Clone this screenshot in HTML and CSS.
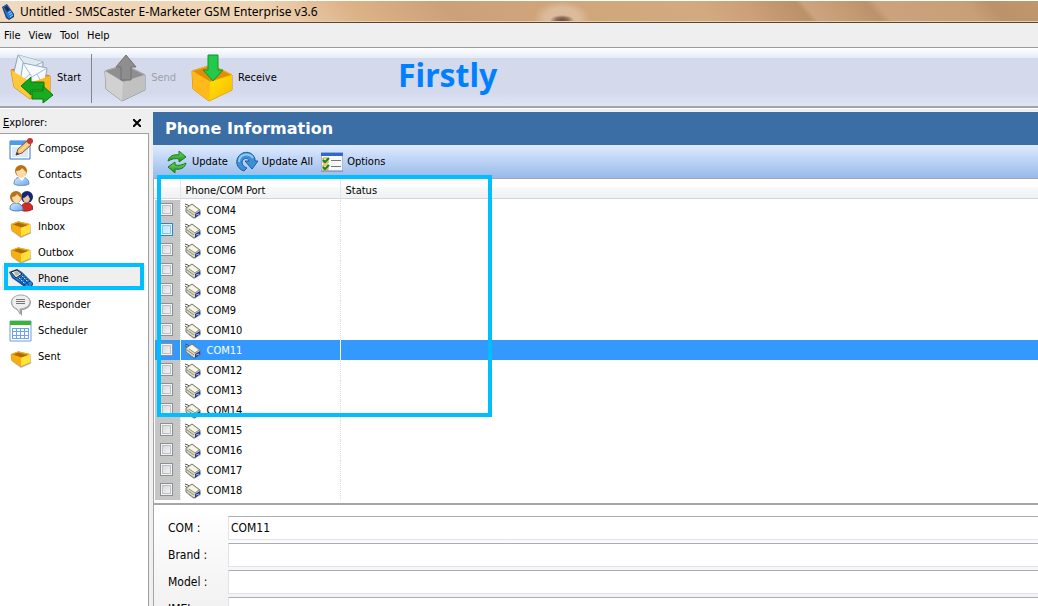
FILE: index.html
```html
<!DOCTYPE html>
<html lang="en">
<head>
    <meta charset="UTF-8">
    <meta name="viewport" content="width=device-width, initial-scale=1.0">
    <title>Untitled - SMSCaster E-Marketer GSM Enterprise v3.6</title>
    <link rel="stylesheet" href="styles.css">
</head>
<body>
    <!-- shared icons -->
    <svg class="defs" aria-hidden="true">
        <defs>
            <linearGradient id="gold" x1="0" y1="0" x2="1" y2="1"><stop offset="0" stop-color="#ffd54a"/><stop offset="1" stop-color="#f0a400"/></linearGradient>
            <linearGradient id="yellow" x1="0" y1="0" x2="1" y2="1"><stop offset="0" stop-color="#ffe600"/><stop offset="1" stop-color="#f7b800"/></linearGradient>
            <linearGradient id="silver" x1="0" y1="0" x2="1" y2="1"><stop offset="0" stop-color="#d8d8d8"/><stop offset="1" stop-color="#a9a9a9"/></linearGradient>
            <linearGradient id="leaf" x1="0" y1="0" x2="0" y2="1"><stop offset="0" stop-color="#6fe05a"/><stop offset="1" stop-color="#1d8f22"/></linearGradient>
            <linearGradient id="sky" x1="0" y1="0" x2="1" y2="1"><stop offset="0" stop-color="#d8ecff"/><stop offset="1" stop-color="#6ba6e6"/></linearGradient>
        </defs>
        <symbol id="phone" viewBox="0 0 24 20">
            <path d="M0 3 8 0l5 3 11 11c1 3-4 6-7 5L3 9z" fill="#0c4c9c"/>
            <path d="M1 3 8 1l4 2 11 11c0 3-3 4-5 4L4 8z" fill="#2b86de"/>
            <path d="m2 3 6-2 5 4-6 4z" fill="#e8edf0" stroke="#222"/>
            <path d="m5 3 3-1 3 3-4 2z" fill="#a9b8b0"/>
            <path d="m9 10 6-4M11 12l6-4M13 14l6-4M15 16l6-4M12 7l8 9M9 9l8 9" stroke="#0b3f86" fill="none"/>
            <path d="m10 10 1-1m2-1 1-1m-2 5 1-1m2-1 1-1m-2 5 1-1m2-1 1-1" stroke="#b9dcff"/>
        </symbol>
        <symbol id="box" viewBox="0 0 24 20">
            <path d="m3 14 9 6 11-5v-2L12 18z" fill="#555" opacity=".4"/>
            <path d="m1 5 8-3 13 3v9l-10 4L2 12z" fill="#ffc20e" stroke="#c98700"/>
            <path d="m1 5 8-3 13 3-10 4z" fill="#d18a00" stroke="#f0b429"/>
            <path d="m4 5 5-2 10 3-7 2z" fill="#a96c00"/>
            <path d="m12 9 10-4v9l-10 4z" fill="#ffe13a"/>
            <path d="m1 5 11 4v9L2 12z" fill="#f9ad12"/>
        </symbol>
        <symbol id="port" viewBox="0 0 16 16">
            <path d="m2 11 7 5 7-4v-3L9 14z" fill="#555" opacity=".35"/>
            <path d="m0 1 3 1 3 3M1 5l4 2M0 3l4 3" stroke="#55554a" fill="none"/>
            <path d="m1 5 6-4 8 6v4l-6 4-8-6z" fill="#dcdcc6" stroke="#77776a"/>
            <path d="m3 5 4-3 6 5-4 3z" fill="#f6f6e6"/>
            <path d="m2 7 7 5M4 6l6 4 4-3" stroke="#8e8e7a" fill="none"/>
            <path d="m10 11 5-3v3l-5 4z" fill="#263b91"/>
            <path d="m11 12 3-1" stroke="#aab8ff"/>
        </symbol>
    </svg>

    <header class="titlebar">
        <svg class="app-icon" viewBox="0 0 15 18">
            <path d="m2 4 5-3 7 10v3l-5 3-3-2z" fill="#0b3f86"/>
            <path d="m3 4 4-2 6 9v2l-4 3-2-2z" fill="#2777cf"/>
            <path d="m4 4 3-1 3 4-3 2z" fill="#1c2c4c"/>
            <path d="m8 10 3-2m-2 4 3-2m-2 4 3-2" stroke="#9fd0ff"/>
        </svg>
        <span>Untitled - SMSCaster E-Marketer GSM Enterprise v3.6</span>
    </header>

    <nav class="menubar">
        <button>File</button>
        <button>View</button>
        <button>Tool</button>
        <button>Help</button>
    </nav>

    <div class="toolbar">
        <button class="big-btn">
            <svg viewBox="0 0 46 50">
                <path d="m3 17 8-2 31 8v17L22 46 6 34z" fill="#efa21b" stroke="#cc8100"/>
                <path d="m10 2 25 7-1 25-22-2-7-9z" fill="#edf3f9" stroke="#8fa3b5"/>
                <path d="m10 2 10 14 15-7" fill="#dfe9f2" stroke="#9db0c1"/>
                <path d="m15 10 24 5-3 19-24-4z" fill="#f7faff" stroke="#91a9c0"/>
                <path d="m15 10 9 14 15-9M12 30l10-9M36 34l-7-13" fill="none" stroke="#a9bdd0"/>
                <path d="m3 17 18 11 1 18L6 34z" fill="#ffc83b"/>
                <path d="m21 30 21-7v17L22 46z" fill="#ffb91f"/>
                <path d="m13 33 10-9v5h13v8H23v5z" fill="#13a51b" stroke="#077c10"/>
                <path d="m45 42-10-9v5H24v8h11v4z" fill="#18ad20" stroke="#077c10"/>
            </svg>
            <span>Start</span>
        </button>
        <span class="separator"></span>
        <button class="big-btn" disabled>
            <svg viewBox="0 0 46 50">
                <path d="m3 18 20-6 20 10v15L20 48 4 36z" fill="url(#silver)" stroke="#8b8b8b"/>
                <path d="m3 18 20-6 20 10-22 7z" fill="#8f8f8f" stroke="#aaa"/>
                <path d="m21 29 22-7v15L20 48z" fill="#c1c1c1"/>
                <path d="m3 18 18 11-1 19L4 36z" fill="#d1d1d1"/>
                <path d="m24 2 10 12h-5v13H19V14h-5z" fill="#8e8e8e" stroke="#717171"/>
            </svg>
            <span>Send</span>
        </button>
        <button class="big-btn">
            <svg viewBox="0 0 46 50">
                <path d="m3 18 20-6 20 10v15L20 48 4 36z" fill="url(#yellow)" stroke="#d78e00"/>
                <path d="m3 18 20-6 20 10-22 7z" fill="#e18e00" stroke="#f4ae26"/>
                <path d="m21 29 22-7v15L20 48z" fill="url(#yellow)"/>
                <path d="m3 18 18 11-1 19L4 36z" fill="#ffb91b"/>
                <path d="M19 2h10v15h5L24 28 14 17h5z" fill="#24c94b" stroke="#109431"/>
            </svg>
            <span>Receive</span>
        </button>
        <strong class="note-text">Firstly</strong>
    </div>

    <div class="workspace">
        <aside class="explorer">
            <div class="explorer-head">
                <span><u>E</u>xplorer:</span>
                <button class="close" aria-label="Close">
                    <svg viewBox="0 0 8 8"><path d="m0 0 8 8M8 0 0 8" stroke="#000" stroke-width="2"/></svg>
                </button>
            </div>
            <ul class="folders">
                <li><a href="#">
                    <svg viewBox="0 0 24 22">
                        <path d="M1 3h20v18H1z" fill="#fff" stroke="#3577c9"/>
                        <path d="M1 3h20v4H1z" fill="#4b9bf0"/>
                        <path d="M3 9h16v10H3z" fill="#dce9f8"/>
                        <path d="m7 17 2-6 9-8 4 4-9 8z" fill="#ffc578" stroke="#7e5730"/>
                        <path d="m7 17 1-3 2 2z" fill="#333"/>
                        <path d="m11 13 8-7" stroke="#fff0c9"/>
                        <circle cx="21" cy="3" r="3" fill="#c73632"/>
                    </svg>Compose</a></li>
                <li><a href="#">
                    <svg viewBox="0 0 24 22">
                        <path d="M5 20c0-5 3-7 7-7s8 2 8 7c-3 2-12 2-15 0z" fill="url(#sky)" stroke="#6193c8"/>
                        <path d="m9 13 4 4 3-4z" fill="#fff"/>
                        <ellipse cx="12" cy="7" rx="6" ry="6" fill="#b97116"/>
                        <path d="M7 7c3 0 5-1 6-3l4 4c0 8-9 8-10-1z" fill="#ffdaa8"/>
                    </svg>Contacts</a></li>
                <li><a href="#">
                    <svg viewBox="0 0 24 22">
                        <path d="M12 20c0-5 2-7 6-7s6 3 6 6c-3 2-9 3-12 1z" fill="#d52a22" stroke="#9c1712"/>
                        <circle cx="18" cy="7" r="6" fill="#112879"/>
                        <path d="M14 8c2 0 3-2 5-3l2 4c-1 5-7 5-7-1z" fill="#f3c49a"/>
                        <path d="M1 19c0-4 2-6 6-6s7 3 7 7c-3 1-10 2-13-1z" fill="url(#sky)" stroke="#4a83c2"/>
                        <circle cx="7" cy="7" r="6" fill="#b97116"/>
                        <path d="M3 7c2 0 4-1 5-3l4 4c-1 7-8 7-9-1z" fill="#ffdaa8"/>
                    </svg>Groups</a></li>
                <li><a href="#"><svg class="box"><use href="#box"/></svg>Inbox</a></li>
                <li><a href="#"><svg class="box"><use href="#box"/></svg>Outbox</a></li>
                <li class="current"><a href="#"><svg><use href="#phone"/></svg>Phone</a></li>
                <li><a href="#">
                    <svg viewBox="0 0 24 22">
                        <path d="M13 16v6l-5-6C-1 13 0 1 12 1s14 13 1 15z" fill="#9a9a9a"/>
                        <path d="M11 15v5l-3-5C0 12 1 1 12 1s13 13-1 14z" fill="#eee" stroke="#aaa"/>
                        <path d="M7 5.500h9M7 7.500h9M7 9.500h9" stroke="#777"/>
                    </svg>Responder</a></li>
                <li><a href="#">
                    <svg viewBox="0 0 24 22">
                        <path d="M1 1h21v20H1z" fill="#fff" stroke="#6f9ed8"/>
                        <path d="M1 1h21v4H1z" fill="#3cb52e"/>
                        <path d="M3 8h17v11H3z" fill="#6ba4ec"/>
                        <path d="M4 9h3v2H4zm4 0h3v2H8zm4 0h3v2h-3zm4 0h3v2h-3zM4 12h3v3H4zm4 0h3v3H8zm4 0h3v3h-3zm4 0h3v3h-3zM4 16h3v2H4zm4 0h3v2H8zm4 0h3v2h-3zm4 0h3v2h-3z" fill="#fff"/>
                    </svg>Scheduler</a></li>
                <li><a href="#"><svg class="box"><use href="#box"/></svg>Sent</a></li>
            </ul>
        </aside>

        <main class="content">
            <h1>Phone Information</h1>
            <div class="actions">
                <button>
                    <svg viewBox="0 0 22 22">
                        <path d="M2 10c1-5 6-7 11-6V0l7 6-7 5V8c-4-1-7 0-11 2z" fill="url(#leaf)" stroke="#187a1c"/>
                        <path d="M20 12c-1 5-6 7-11 6v4l-7-6 7-5v3c4 1 7 0 11-2z" fill="url(#leaf)" stroke="#187a1c"/>
                    </svg>Update</button>
                <button>
                    <svg viewBox="0 0 22 22">
                        <path d="M8 20C2 18 0 13 1 9c2-9 15-11 18-1v2h3l-6 8-7-8h4c-1-4-6-3-7 1 0 3 2 5 5 6z" fill="#3d8fd8" stroke="#1c5e9f"/>
                        <path d="M3 11C3 3 13 1 17 7" fill="none" stroke="#90cbf8" stroke-width="2"/>
                    </svg>Update All</button>
                <button>
                    <svg viewBox="0 0 22 22">
                        <path d="M0 2h22v18H0z" fill="#f6f8fc" stroke="#667ba5"/>
                        <path d="M0 2h22v3H0z" fill="#2c69d4"/>
                        <path d="M2 7h5v5H2zm0 7h5v5H2z" fill="#fff2b0" stroke="#c99b2b"/>
                        <path d="m2 9 2 2 4-4M2 16l2 2 4-4" fill="none" stroke="#168421" stroke-width="2"/>
                        <path d="M10 9.500h10M10 15.500h10" stroke="#777"/>
                    </svg>Options</button>
            </div>

            <div class="port-list">
                <table>
                    <colgroup><col class="c-check"><col class="c-port"><col></colgroup>
                    <thead>
                        <tr><th></th><th>Phone/COM Port</th><th>Status</th></tr>
                    </thead>
                    <tbody>
                        <tr><td><input type="checkbox" aria-label="COM4"></td><td><svg><use href="#port"/></svg>COM4</td><td></td></tr>
                        <tr><td><input type="checkbox" class="hot" aria-label="COM5"></td><td><svg><use href="#port"/></svg>COM5</td><td></td></tr>
                        <tr><td><input type="checkbox" aria-label="COM6"></td><td><svg><use href="#port"/></svg>COM6</td><td></td></tr>
                        <tr><td><input type="checkbox" aria-label="COM7"></td><td><svg><use href="#port"/></svg>COM7</td><td></td></tr>
                        <tr><td><input type="checkbox" aria-label="COM8"></td><td><svg><use href="#port"/></svg>COM8</td><td></td></tr>
                        <tr><td><input type="checkbox" aria-label="COM9"></td><td><svg><use href="#port"/></svg>COM9</td><td></td></tr>
                        <tr><td><input type="checkbox" aria-label="COM10"></td><td><svg><use href="#port"/></svg>COM10</td><td></td></tr>
                        <tr class="selected"><td><input type="checkbox" aria-label="COM11"></td><td><svg><use href="#port"/></svg>COM11</td><td></td></tr>
                        <tr><td><input type="checkbox" aria-label="COM12"></td><td><svg><use href="#port"/></svg>COM12</td><td></td></tr>
                        <tr><td><input type="checkbox" aria-label="COM13"></td><td><svg><use href="#port"/></svg>COM13</td><td></td></tr>
                        <tr><td><input type="checkbox" aria-label="COM14"></td><td><svg><use href="#port"/></svg>COM14</td><td></td></tr>
                        <tr><td><input type="checkbox" aria-label="COM15"></td><td><svg><use href="#port"/></svg>COM15</td><td></td></tr>
                        <tr><td><input type="checkbox" aria-label="COM16"></td><td><svg><use href="#port"/></svg>COM16</td><td></td></tr>
                        <tr><td><input type="checkbox" aria-label="COM17"></td><td><svg><use href="#port"/></svg>COM17</td><td></td></tr>
                        <tr><td><input type="checkbox" aria-label="COM18"></td><td><svg><use href="#port"/></svg>COM18</td><td></td></tr>
                    </tbody>
                </table>
                <div class="note-box"></div>
            </div>

            <form class="details">
                <label for="com">COM :</label><input id="com" type="text" value="COM11">
                <label for="brand">Brand :</label><input id="brand" type="text">
                <label for="model">Model :</label><input id="model" type="text">
                <label for="imei">IMEI :</label><input id="imei" type="text">
            </form>
        </main>
    </div>
</body>
</html>
```
FILE: styles.css
```css
*{
    box-sizing: border-box;
}
body{
    display: flex;
    flex-direction: column;
    height: 100vh;
    margin: 0;
    overflow: hidden;
    background-color: #efefef;
    color: #000;
    font: 11px/16px "DejaVu Sans Condensed", "Noto Sans", sans-serif;
}
button{
    padding: 0;
    border: 0;
    background: none;
    color: inherit;
    font: inherit;
}
svg{
    flex: none;
}
.defs{
    position: absolute;
    width: 0;
    height: 0;
}
/*title and menu*/
.titlebar{
    display: flex;
    flex: none;
    align-items: center;
    gap: 5px;
    height: 23px;
    border-top: 1px solid #fff;
    border-bottom: 1px solid #5c4434;
    box-shadow: inset 0 -1px #e8cdb0;
    background:
        radial-gradient(ellipse 12px 5px at 562px 19px, #6b5040 0, #8c6e5a 50%, transparent 100%),
        radial-gradient(ellipse 28px 18px at 562px 18px, #dcbb9c 0, #dcbb9c 60%, transparent 100%),
        linear-gradient(50deg, #f0d9bf 0, #efd3b2 210px, #dcb287 278px, #cda177 350px, #d3aa7f 543px, #cda077 580px, #bb9168 622px, #cca47e 628px, #c49a72 658px, #bc926a 676px, #cba27c 684px, #c8a077 750px, #bc926a 770px, #c0966b 809px);
    font: 12px/16px "Noto Sans", "Open Sans", sans-serif;
}
.app-icon{
    width: 15px;
    height: 18px;
}
.menubar{
    display: flex;
    flex: none;
    gap: 8px;
    height: 25px;
    padding: 2px 0 0 4px;
    border-bottom: 1px solid #9c9a9f;
}
/*main toolbar*/
.toolbar{
    position: relative;
    display: flex;
    flex: none;
    align-items: center;
    height: 60px;
    padding: 2px 0 0 8px;
    border-bottom: 2px solid #a0a2ac;
    background: linear-gradient(#fff 0, #e4ebf7 10px, #d4d9ec 10px, #d4d9ec 44px, #e0e5f5 58px);
}
.big-btn{
    display: flex;
    align-items: center;
    gap: 3px;
}
.big-btn svg{
    width: 46px;
    height: 50px;
}
.big-btn:disabled{
    color: #a0a0a8;
}
.big-btn + .big-btn{
    margin-left: 13px;
}
.separator{
    width: 1px;
    height: 49px;
    margin: 0 10px;
    background-color: #85858f;
}
.note-text{
    position: absolute;
    top: 5px;
    left: 398px;
    color: #0080ff;
    font: bold 32px/44px "Noto Sans", "Open Sans", sans-serif;
}
.workspace{
    display: flex;
    flex: 1;
    min-height: 0;
    border-top: 1px solid #fff;
}
/*explorer*/
.explorer{
    display: flex;
    flex: none;
    flex-direction: column;
    width: 149px;
    margin-right: 4px;
}
.explorer-head{
    display: flex;
    align-items: center;
    justify-content: space-between;
    height: 24px;
    padding: 3px 8px 0 3px;
}
.close{
    display: flex;
}
.close svg{
    width: 8px;
    height: 8px;
}
.folders{
    flex: 1;
    margin: 0;
    padding: 1px 0 0 2px;
    border-top: 1px solid #a0a0a0;
    border-right: 1px solid #a0a0a0;
    background-color: #fff;
    list-style: none;
}
.folders li{
    position: relative;
    margin-right: 2px;
}
.folders a{
    display: flex;
    align-items: center;
    gap: 5px;
    height: 26px;
    padding: 2px 0 0 7px;
    color: #000;
    text-decoration: none;
}
.folders svg{
    width: 24px;
    height: 22px;
}
.folders .box{
    padding-top: 4px;
}
.folders .current{
    background-color: #efefef;
}
.folders .current::after{
    content: "";
    position: absolute;
    inset: -2px 2px 1px;
    border: 4px solid #00bfff;
}
/*content*/
.content{
    display: flex;
    flex: 1;
    flex-direction: column;
    min-width: 0;
    margin-top: 3px;
}
.content h1{
    flex: none;
    height: 33px;
    margin: 0;
    padding-left: 12px;
    background-color: #3a6ea5;
    color: #fff;
    font: bold 16px/33px "DejaVu Sans", "Noto Sans", sans-serif;
}
.actions{
    display: flex;
    flex: none;
    gap: 8px;
    height: 33px;
    padding: 1px 0 0 13px;
    background: linear-gradient(#deebff, #97b9ea);
}
.actions button{
    display: flex;
    align-items: center;
    gap: 4px;
}
.actions svg{
    width: 22px;
    height: 22px;
}
.port-list{
    position: relative;
    flex: none;
    padding-bottom: 3px;
    border: solid #a5a5aa;
    border-width: 1px 0 2px 1px;
    background-color: #fff;
}
table{
    width: 100%;
    border-collapse: collapse;
    table-layout: fixed;
}
.c-check{
    width: 26px;
}
.c-port{
    width: 160px;
}
th{
    height: 21px;
    padding: 2px 0 0 5px;
    background: linear-gradient(#fff 0, #fff 8px, #f6f7f9 9px, #f0f1f2 19px, #d5d5d5 19px, #d5d5d5 20px, #fff 20px);
    font-weight: normal;
    text-align: left;
}
th + th{
    border-left: 1px solid #e2e4e8;
}
td{
    height: 20px;
    padding: 0;
}
td + td{
    padding-top: 2px;
    border-left: 1px dotted #ddd;
}
td:first-child{
    background-color: #c6c6c6;
    box-shadow: inset 1px 0 #fff;
}
td svg{
    width: 16px;
    height: 16px;
    margin: 0 6px 0 4px;
    vertical-align: middle;
}
td input{
    display: block;
    width: 13px;
    height: 13px;
    margin: 0 0 2px 6px;
    appearance: none;
    border: 1px solid #8e8f8f;
    box-shadow: inset 0 0 0 1px #f4f4f4, inset 0 0 0 2px #bcc0c6;
    background: linear-gradient(135deg, #cfd2d8, #fbfbfb);
}
td .hot{
    border-color: #3c7fb1;
    box-shadow: inset 0 0 0 1px #def9fa, inset 0 0 0 2px #79c6f9;
    background: linear-gradient(135deg, #b1dffd, #e9f7fe);
}
.selected td{
    background-color: #3399ff;
    color: #fff;
}
.selected td + td{
    border-left: 1px solid #fff;
}
.note-box{
    position: absolute;
    top: -4px;
    left: 3px;
    width: 335px;
    height: 242px;
    border: 4px solid #00bfff;
}
/*phone details*/
.details{
    display: grid;
    flex: 1;
    grid-template-columns: 60px 1fr;
    grid-auto-rows: 24px;
    gap: 3px 0;
    min-height: 0;
    padding: 11px 0 0 14px;
    overflow: hidden;
    border-left: 1px solid #a5a5aa;
    background: linear-gradient(#fff, #f2f2f2);
    font-size: 12px;
    line-height: 24px;
}
.details input{
    min-width: 0;
    padding: 0 2px;
    border: 1px solid #e2e3ea;
    border-top-color: #abadb3;
    border-right: 0;
    background-color: #fff;
    font: inherit;
}
```
